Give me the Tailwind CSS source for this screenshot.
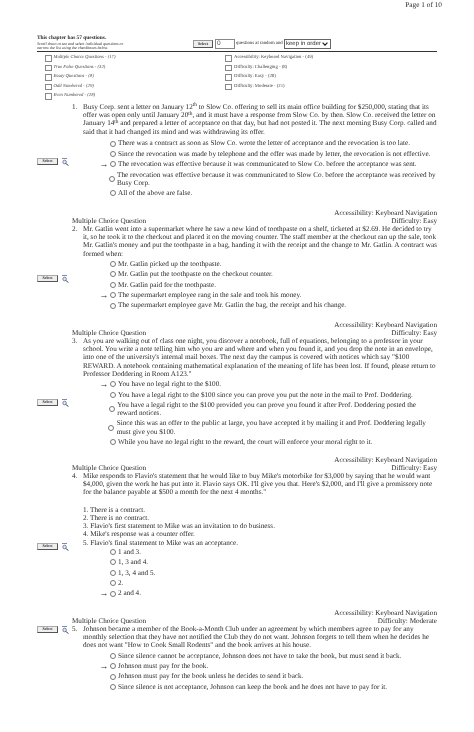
<!DOCTYPE html>
<html lang="en">
<head>
    <meta charset="UTF-8">
    <title>Chapter questions</title>
    <script src="https://cdn.jsdelivr.net/npm/@tailwindcss/browser@4"></script>
</head>
<body class="bg-white text-[#2a2a2a] overflow-hidden [text-rendering:geometricPrecision]" style="font-family: 'Liberation Serif', serif">
<div class="h-[732px] w-[474px] pl-[37px] pr-[37px] text-[7.2px] leading-[8.2px] blur-[0.3px]">
    <div class="text-right pt-px mr-[-5px] text-[7.3px] h-[36px]">Page 1 of 10</div>

    <!-- header -->
    <div class="flex items-end h-[16px] border-b border-[#333]">
        <div class="w-[156px]">
            <div class="font-bold text-[5.4px] leading-[5.5px]">This chapter has 57 questions.</div>
            <div class="italic text-[4.1px] leading-[4.6px]">Scroll down to see and select individual questions or<br>narrow the list using the checkboxes below.</div>
        </div>
        <div class="flex items-center mb-[2.5px]">
            <div class="w-[20px] h-[7.5px] flex items-center justify-center bg-[#eee] border border-[#999] border-r-[#555] border-b-[#555] font-bold text-[4px]">Select</div>
            <div class="ml-[2px] w-[20px] h-[9.5px] border border-[#888] text-[6.5px] leading-[8px] pl-px text-[#555]" style="font-family: 'Liberation Sans', sans-serif">0</div>
            <div class="ml-[1px] w-[48px] text-[4.8px] whitespace-nowrap">questions at random and</div>
            <div class="w-[47px] h-[9.5px] border border-[#666] flex items-center justify-between pl-px pr-[2px] text-[6px] whitespace-nowrap" style="font-family: 'Liberation Sans', sans-serif">
                <span>keep in order</span>
                <svg width="6" height="4" viewBox="0 0 6 4"><path d="M.6.6 3 3.2 5.4.6" fill="none" stroke="#222" stroke-width="1.2"/></svg>
            </div>
        </div>
    </div>

    <!-- filters -->
    <div class="grid grid-cols-[180px_1fr] pl-[8px] pt-[1.5px] text-[4.7px] h-[51px] auto-rows-[9.5px] text-[#444]">
        <div class="flex items-center gap-[2px] italic"><span class="w-[6.5px] h-[6.5px] border border-[#888]"></span>Multiple Choice Questions - (17)</div>
        <div class="flex items-center gap-[2.5px]"><span class="w-[6.5px] h-[6.5px] border border-[#888]"></span>Accessibility: Keyboard Navigation - (49)</div>
        <div class="flex items-center gap-[2px] italic"><span class="w-[6.5px] h-[6.5px] border border-[#888]"></span>True False Questions - (32)</div>
        <div class="flex items-center gap-[2.5px]"><span class="w-[6.5px] h-[6.5px] border border-[#888]"></span>Difficulty: Challenging - (8)</div>
        <div class="flex items-center gap-[2px] italic"><span class="w-[6.5px] h-[6.5px] border border-[#888]"></span>Essay Questions - (8)</div>
        <div class="flex items-center gap-[2.5px]"><span class="w-[6.5px] h-[6.5px] border border-[#888]"></span>Difficulty: Easy - (28)</div>
        <div class="flex items-center gap-[2px] italic"><span class="w-[6.5px] h-[6.5px] border border-[#888]"></span>Odd Numbered - (29)</div>
        <div class="flex items-center gap-[2.5px]"><span class="w-[6.5px] h-[6.5px] border border-[#888]"></span>Difficulty: Moderate - (21)</div>
        <div class="flex items-center gap-[2px] italic"><span class="w-[6.5px] h-[6.5px] border border-[#888]"></span>Even Numbered - (28)</div>
    </div>

    <!-- question 1 -->
    <div class="flex h-[101px]">
        <div class="w-[35px] pt-[55px] flex items-start gap-[3px]">
            <div class="w-[21px] h-[7px] flex items-center justify-center bg-[#eee] border border-[#aaa] border-r-[#555] border-b-[#555] font-bold text-[4px]">Select</div>
            <svg width="8" height="8" viewBox="0 0 8 8"><path d="M1 .5h5" stroke="#7a8ab0"/><circle cx="3.6" cy="4" r="1.8" fill="#dfe6f5" stroke="#4b5d8c" stroke-width=".7"/><path d="M5 5.4 7.2 7.6" stroke="#222" stroke-width="1"/></svg>
        </div>
        <div class="flex-1">
            <div class="flex">
                <span class="w-[11px]">1.</span>
                <p class="flex-1">Busy Corp. sent a letter on January 12<sup>th</sup> to Slow Co. offering to sell its main office building for $250,000, stating that its offer was open only until January 20<sup>th</sup>, and it must have a response from Slow Co. by then. Slow Co. received the letter on January 14<sup>th</sup> and prepared a letter of acceptance on that day, but had not posted it. The next morning Busy Corp. called and said that it had changed its mind and was withdrawing its offer.</p>
            </div>
            <div class="pl-[26.5px] pt-[2.5px]">
                <div class="flex items-center min-h-[10.4px]"><span class="w-[11px] text-right pr-[1px]"></span><span class="w-[6px] h-[6px] rounded-full border border-[#777] mr-[2.5px] shrink-0"></span><span>There was a contract as soon as Slow Co. wrote the letter of acceptance and the revocation is too late.</span></div>
                <div class="flex items-center min-h-[10.4px]"><span class="w-[11px] text-right pr-[1px]"></span><span class="w-[6px] h-[6px] rounded-full border border-[#777] mr-[2.5px] shrink-0"></span><span>Since the revocation was made by telephone and the offer was made by letter, the revocation is not effective.</span></div>
                <div class="flex items-center min-h-[10.4px]"><span class="w-[11px] text-right pr-[1px] text-[9px]">→</span><span class="w-[6px] h-[6px] rounded-full border border-[#777] mr-[2.5px] shrink-0"></span><span>The revocation was effective because it was communicated to Slow Co. before the acceptance was sent.</span></div>
                <div class="flex items-center min-h-[18.6px]"><span class="w-[11px] text-right pr-[1px]"></span><span class="w-[6px] h-[6px] rounded-full border border-[#777] mr-[2.5px] shrink-0"></span><span>The revocation was effective because it was communicated to Slow Co. before the acceptance was received by Busy Corp.</span></div>
                <div class="flex items-center min-h-[10.4px]"><span class="w-[11px] text-right pr-[1px]"></span><span class="w-[6px] h-[6px] rounded-full border border-[#777] mr-[2.5px] shrink-0"></span><span>All of the above are false.</span></div>
            </div>
        </div>
    </div>
    <div class="pl-[35px] flex justify-between items-end h-[21px] text-[7.15px]">
        <span>Multiple Choice Question</span>
        <span class="text-right">Accessibility: Keyboard Navigation<br>Difficulty: Easy</span>
    </div>

    <!-- question 2 -->
    <div class="flex h-[91px]">
        <div class="w-[35px] pt-[50px] flex items-start gap-[3px]">
            <div class="w-[21px] h-[7px] flex items-center justify-center bg-[#eee] border border-[#aaa] border-r-[#555] border-b-[#555] font-bold text-[4px]">Select</div>
            <svg width="8" height="8" viewBox="0 0 8 8"><path d="M1 .5h5" stroke="#7a8ab0"/><circle cx="3.6" cy="4" r="1.8" fill="#dfe6f5" stroke="#4b5d8c" stroke-width=".7"/><path d="M5 5.4 7.2 7.6" stroke="#222" stroke-width="1"/></svg>
        </div>
        <div class="flex-1">
            <div class="flex">
                <span class="w-[11px]">2.</span>
                <p class="flex-1">Mr. Gatlin went into a supermarket where he saw a new kind of toothpaste on a shelf, ticketed at $2.69. He decided to try it, so he took it to the checkout and placed it on the moving counter. The staff member at the checkout ran up the sale, took Mr. Gatlin's money and put the toothpaste in a bag, handing it with the receipt and the change to Mr. Gatlin. A contract was formed when:</p>
            </div>
            <div class="pl-[26.5px] pt-[1px]">
                <div class="flex items-center min-h-[10.4px]"><span class="w-[11px] text-right pr-[1px]"></span><span class="w-[6px] h-[6px] rounded-full border border-[#777] mr-[2.5px] shrink-0"></span><span>Mr. Gatlin picked up the toothpaste.</span></div>
                <div class="flex items-center min-h-[10.4px]"><span class="w-[11px] text-right pr-[1px]"></span><span class="w-[6px] h-[6px] rounded-full border border-[#777] mr-[2.5px] shrink-0"></span><span>Mr. Gatlin put the toothpaste on the checkout counter.</span></div>
                <div class="flex items-center min-h-[10.4px]"><span class="w-[11px] text-right pr-[1px]"></span><span class="w-[6px] h-[6px] rounded-full border border-[#777] mr-[2.5px] shrink-0"></span><span>Mr. Gatlin paid for the toothpaste.</span></div>
                <div class="flex items-center min-h-[10.4px]"><span class="w-[11px] text-right pr-[1px] text-[9px]">→</span><span class="w-[6px] h-[6px] rounded-full border border-[#777] mr-[2.5px] shrink-0"></span><span>The supermarket employee rang in the sale and took his money.</span></div>
                <div class="flex items-center min-h-[10.4px]"><span class="w-[11px] text-right pr-[1px]"></span><span class="w-[6px] h-[6px] rounded-full border border-[#777] mr-[2.5px] shrink-0"></span><span>The supermarket employee gave Mr. Gatlin the bag, the receipt and his change.</span></div>
            </div>
        </div>
    </div>
    <div class="pl-[35px] flex justify-between items-end h-[21px] text-[7.15px]">
        <span>Multiple Choice Question</span>
        <span class="text-right">Accessibility: Keyboard Navigation<br>Difficulty: Easy</span>
    </div>

    <!-- question 3 -->
    <div class="flex h-[114px]">
        <div class="w-[35px] pt-[62px] flex items-start gap-[3px]">
            <div class="w-[21px] h-[7px] flex items-center justify-center bg-[#eee] border border-[#aaa] border-r-[#555] border-b-[#555] font-bold text-[4px]">Select</div>
            <svg width="8" height="8" viewBox="0 0 8 8"><path d="M1 .5h5" stroke="#7a8ab0"/><circle cx="3.6" cy="4" r="1.8" fill="#dfe6f5" stroke="#4b5d8c" stroke-width=".7"/><path d="M5 5.4 7.2 7.6" stroke="#222" stroke-width="1"/></svg>
        </div>
        <div class="flex-1">
            <div class="flex">
                <span class="w-[11px]">3.</span>
                <p class="flex-1">As you are walking out of class one night, you discover a notebook, full of equations, belonging to a professor in your school. You write a note telling him who you are and where and when you found it, and you drop the note in an envelope, into one of the university's internal mail boxes. The next day the campus is covered with notices which say "$100 REWARD. A notebook containing mathematical explanation of the meaning of life has been lost. If found, please return to Professor Doddering in Room A123."</p>
            </div>
            <div class="pl-[26.5px] pt-[1px]">
                <div class="flex items-center min-h-[10.4px]"><span class="w-[11px] text-right pr-[1px] text-[9px]">→</span><span class="w-[6px] h-[6px] rounded-full border border-[#777] mr-[2.5px] shrink-0"></span><span>You have no legal right to the $100.</span></div>
                <div class="flex items-center min-h-[10.4px]"><span class="w-[11px] text-right pr-[1px]"></span><span class="w-[6px] h-[6px] rounded-full border border-[#777] mr-[2.5px] shrink-0"></span><span>You have a legal right to the $100 since you can prove you put the note in the mail to Prof. Doddering.</span></div>
                <div class="flex items-center min-h-[18.6px]"><span class="w-[11px] text-right pr-[1px]"></span><span class="w-[6px] h-[6px] rounded-full border border-[#777] mr-[2.5px] shrink-0"></span><span>You have a legal right to the $100 provided you can prove you found it after Prof. Doddering posted the reward notices.</span></div>
                <div class="flex items-center min-h-[18.6px]"><span class="w-[11px] text-right pr-[1px]"></span><span class="w-[6px] h-[6px] rounded-full border border-[#777] mr-[2.5px] shrink-0"></span><span>Since this was an offer to the public at large, you have accepted it by mailing it and Prof. Doddering legally must give you $100.</span></div>
                <div class="flex items-center min-h-[10.4px]"><span class="w-[11px] text-right pr-[1px]"></span><span class="w-[6px] h-[6px] rounded-full border border-[#777] mr-[2.5px] shrink-0"></span><span>While you have no legal right to the reward, the court will enforce your moral right to it.</span></div>
            </div>
        </div>
    </div>
    <div class="pl-[35px] flex justify-between items-end h-[21px] text-[7.15px]">
        <span>Multiple Choice Question</span>
        <span class="text-right">Accessibility: Keyboard Navigation<br>Difficulty: Easy</span>
    </div>

    <!-- question 4 -->
    <div class="flex h-[132px]">
        <div class="w-[35px] pt-[71px] flex items-start gap-[3px]">
            <div class="w-[21px] h-[7px] flex items-center justify-center bg-[#eee] border border-[#aaa] border-r-[#555] border-b-[#555] font-bold text-[4px]">Select</div>
            <svg width="8" height="8" viewBox="0 0 8 8"><path d="M1 .5h5" stroke="#7a8ab0"/><circle cx="3.6" cy="4" r="1.8" fill="#dfe6f5" stroke="#4b5d8c" stroke-width=".7"/><path d="M5 5.4 7.2 7.6" stroke="#222" stroke-width="1"/></svg>
        </div>
        <div class="flex-1">
            <div class="flex">
                <span class="w-[11px]">4.</span>
                <div class="flex-1">
                    <p>Mike responds to Flavio's statement that he would like to buy Mike's motorbike for $3,000 by saying that he would want $4,000, given the work he has put into it. Flavio says OK. I'll give you that. Here's $2,000, and I'll give a promissory note for the balance payable at $500 a month for the next 4 months."</p>
                    <p class="mt-[9.2px]">1. There is a contract.<br>2. There is no contract.<br>3. Flavio's first statement to Mike was an invitation to do business.<br>4. Mike's response was a counter offer.<br>5. Flavio's final statement to Mike was an acceptance.</p>
                </div>
            </div>
            <div class="pl-[26.5px]">
                <div class="flex items-center min-h-[10.4px]"><span class="w-[11px] text-right pr-[1px]"></span><span class="w-[6px] h-[6px] rounded-full border border-[#777] mr-[2.5px] shrink-0"></span><span>1 and 3.</span></div>
                <div class="flex items-center min-h-[10.4px]"><span class="w-[11px] text-right pr-[1px]"></span><span class="w-[6px] h-[6px] rounded-full border border-[#777] mr-[2.5px] shrink-0"></span><span>1, 3 and 4.</span></div>
                <div class="flex items-center min-h-[10.4px]"><span class="w-[11px] text-right pr-[1px]"></span><span class="w-[6px] h-[6px] rounded-full border border-[#777] mr-[2.5px] shrink-0"></span><span>1, 3, 4 and 5.</span></div>
                <div class="flex items-center min-h-[10.4px]"><span class="w-[11px] text-right pr-[1px]"></span><span class="w-[6px] h-[6px] rounded-full border border-[#777] mr-[2.5px] shrink-0"></span><span>2.</span></div>
                <div class="flex items-center min-h-[10.4px]"><span class="w-[11px] text-right pr-[1px] text-[9px]">→</span><span class="w-[6px] h-[6px] rounded-full border border-[#777] mr-[2.5px] shrink-0"></span><span>2 and 4.</span></div>
            </div>
        </div>
    </div>
    <div class="pl-[35px] flex justify-between items-end h-[21px] text-[7.15px]">
        <span>Multiple Choice Question</span>
        <span class="text-right">Accessibility: Keyboard Navigation<br>Difficulty: Moderate</span>
    </div>

    <!-- question 5 -->
    <div class="flex">
        <div class="w-[35px] pt-[1px] flex items-start gap-[3px]">
            <div class="w-[21px] h-[7px] flex items-center justify-center bg-[#eee] border border-[#aaa] border-r-[#555] border-b-[#555] font-bold text-[4px]">Select</div>
            <svg width="8" height="8" viewBox="0 0 8 8"><path d="M1 .5h5" stroke="#7a8ab0"/><circle cx="3.6" cy="4" r="1.8" fill="#dfe6f5" stroke="#4b5d8c" stroke-width=".7"/><path d="M5 5.4 7.2 7.6" stroke="#222" stroke-width="1"/></svg>
        </div>
        <div class="flex-1">
            <div class="flex">
                <span class="w-[11px]">5.</span>
                <p class="flex-1">Johnson became a member of the Book-a-Month Club under an agreement by which members agree to pay for any monthly selection that they have not notified the Club they do not want. Johnson forgets to tell them when he decides he does not want "How to Cook Small Rodents" and the book arrives at his house.</p>
            </div>
            <div class="pl-[26.5px] pt-[1px]">
                <div class="flex items-center min-h-[10.4px]"><span class="w-[11px] text-right pr-[1px]"></span><span class="w-[6px] h-[6px] rounded-full border border-[#777] mr-[2.5px] shrink-0"></span><span>Since silence cannot be acceptance, Johnson does not have to take the book, but must send it back.</span></div>
                <div class="flex items-center min-h-[10.4px]"><span class="w-[11px] text-right pr-[1px] text-[9px]">→</span><span class="w-[6px] h-[6px] rounded-full border border-[#777] mr-[2.5px] shrink-0"></span><span>Johnson must pay for the book.</span></div>
                <div class="flex items-center min-h-[10.4px]"><span class="w-[11px] text-right pr-[1px]"></span><span class="w-[6px] h-[6px] rounded-full border border-[#777] mr-[2.5px] shrink-0"></span><span>Johnson must pay for the book unless he decides to send it back.</span></div>
                <div class="flex items-center min-h-[10.4px]"><span class="w-[11px] text-right pr-[1px]"></span><span class="w-[6px] h-[6px] rounded-full border border-[#777] mr-[2.5px] shrink-0"></span><span>Since silence is not acceptance, Johnson can keep the book and he does not have to pay for it.</span></div>
            </div>
        </div>
    </div>
</div>
</body>
</html>
